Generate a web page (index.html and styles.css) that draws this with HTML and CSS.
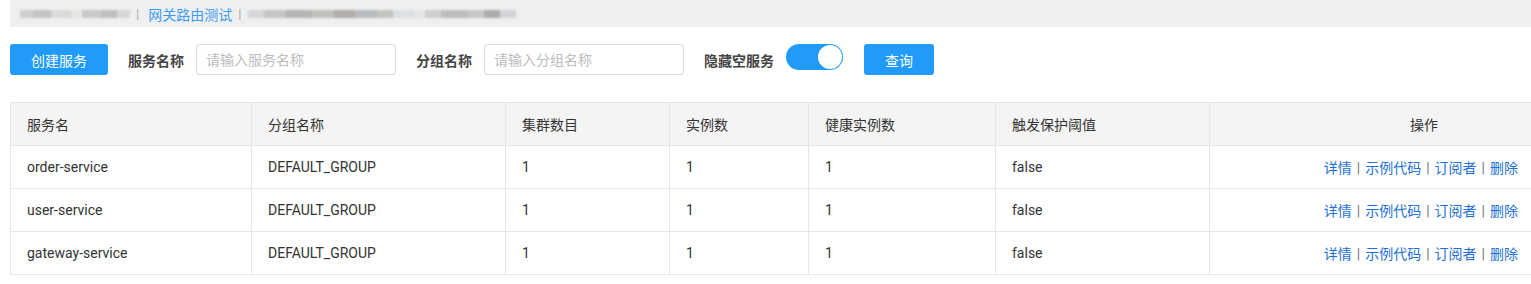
FILE: index.html
```html
<!DOCTYPE html>
<html lang="zh-CN">
<head>
    <meta charset="UTF-8">
    <meta name="viewport" content="width=device-width, initial-scale=1.0">
    <title>服务列表</title>
    <link rel="stylesheet" href="styles.css">
</head>
<body>
<div class="page">
    <div class="crumbs">
        <span class="blur blur-a"></span>
        <span class="sep">|</span>
        <a class="crumb-link" href="#">网关路由测试</a>
        <span class="sep">|</span>
        <span class="blur blur-b"></span>
    </div>

    <div class="toolbar">
        <button class="btn btn-wide">创建服务</button>
        <div class="field">
            <label>服务名称</label>
            <input type="text" placeholder="请输入服务名称">
        </div>
        <div class="field">
            <label>分组名称</label>
            <input type="text" placeholder="请输入分组名称">
        </div>
        <div class="field">
            <label>隐藏空服务</label>
            <span class="switch"><span class="knob"></span></span>
        </div>
        <button class="btn btn-query">查询</button>
    </div>

    <table class="list">
        <colgroup>
            <col style="width: 241px">
            <col style="width: 254px">
            <col style="width: 164px">
            <col style="width: 139px">
            <col style="width: 187px">
            <col style="width: 214px">
            <col style="width: 429px">
        </colgroup>
        <thead>
            <tr>
                <th>服务名</th>
                <th>分组名称</th>
                <th>集群数目</th>
                <th>实例数</th>
                <th>健康实例数</th>
                <th>触发保护阈值</th>
                <th class="center">操作</th>
            </tr>
        </thead>
        <tbody>
            <tr>
                <td>order-service</td>
                <td>DEFAULT_GROUP</td>
                <td>1</td>
                <td>1</td>
                <td>1</td>
                <td>false</td>
                <td class="actions"><a href="#">详情</a><span class="bar">|</span><a href="#">示例代码</a><span class="bar">|</span><a href="#">订阅者</a><span class="bar">|</span><a href="#">删除</a></td>
            </tr>
            <tr>
                <td>user-service</td>
                <td>DEFAULT_GROUP</td>
                <td>1</td>
                <td>1</td>
                <td>1</td>
                <td>false</td>
                <td class="actions"><a href="#">详情</a><span class="bar">|</span><a href="#">示例代码</a><span class="bar">|</span><a href="#">订阅者</a><span class="bar">|</span><a href="#">删除</a></td>
            </tr>
            <tr>
                <td>gateway-service</td>
                <td>DEFAULT_GROUP</td>
                <td>1</td>
                <td>1</td>
                <td>1</td>
                <td>false</td>
                <td class="actions"><a href="#">详情</a><span class="bar">|</span><a href="#">示例代码</a><span class="bar">|</span><a href="#">订阅者</a><span class="bar">|</span><a href="#">删除</a></td>
            </tr>
        </tbody>
    </table>
</div>
</body>
</html>
```

FILE: styles.css
```css
html, body {
    margin: 0;
    overflow: hidden;
    background: #fff;
}

.page {
    width: 1531px;
    height: 284px;
    overflow: hidden;
    font-family: Roboto, "Noto Sans CJK SC", sans-serif;
    font-size: 14px;
    color: #333;
}

/* breadcrumb bar */
.crumbs {
    margin-left: 10px;
    height: 27px;
    background: #efefef;
    display: flex;
    align-items: center;
    padding-left: 10px;
    box-sizing: border-box;
}

.crumbs .sep {
    color: #aaa;
    margin: 0 9px 0 6px;
    font-size: 13px;
}

.crumb-link {
    color: #3d9cf3;
    text-decoration: none;
}

.blur {
    display: inline-block;
    height: 8px;
    filter: blur(1px);
}

.blur-a {
    width: 110px;
    background: linear-gradient(90deg, #cfcfcf 0 12%, #c4c4c4 12% 28%, #dadada 28% 46%, #e6e6e2 46% 56%, #c9c9c9 56% 74%, #bfbfbf 74% 88%, #d6d6d6 88% 100%);
}

.blur-b {
    width: 268px;
    margin-left: -2px;
    background: linear-gradient(90deg, #d6d6d6 0 6%, #c6c6c6 6% 14%, #b4b4b4 14% 24%, #c0c0bc 24% 32%, #b2aeaa 32% 40%, #b8bcc0 40% 48%, #c6c4c0 48% 54%, #dde0e4 54% 62%, #e6e6e6 62% 66%, #cfcfcf 66% 72%, #bdbdbd 72% 82%, #c8c8c8 82% 88%, #acacac 88% 94%, #d4d4d8 94% 100%);
}

/* toolbar */
.toolbar {
    display: flex;
    align-items: center;
    gap: 20px;
    padding-left: 10px;
    margin-top: 17px;
    height: 31px;
}

.field {
    display: flex;
    align-items: center;
    gap: 12px;
}

.field label {
    font-weight: bold;
    color: #444;
}

.field input {
    width: 200px;
    height: 31px;
    box-sizing: border-box;
    border: 1px solid #dcdcdc;
    border-radius: 3px;
    padding: 0 9px;
    font-family: inherit;
    font-size: 14px;
    outline: none;
}

.field input::placeholder {
    color: #bcbcbc;
}

.btn {
    height: 31px;
    border: 0;
    border-radius: 3px;
    background: #209bfa;
    color: #fff;
    font-family: inherit;
    font-size: 14px;
    cursor: pointer;
}

.btn-wide {
    width: 98px;
}

.btn-query {
    width: 70px;
    margin-left: 1px;
}

.switch {
    position: relative;
    display: inline-block;
    width: 57px;
    height: 26px;
    border-radius: 13px;
    background: #209bfa;
    margin-bottom: 5px;
}

.knob {
    position: absolute;
    top: 1px;
    right: 1px;
    width: 24px;
    height: 24px;
    border-radius: 50%;
    background: #fff;
}

/* table */
.list {
    margin: 27px 0 0 10px;
    border-collapse: collapse;
    table-layout: fixed;
    width: 1628px;
}

.list th,
.list td {
    border: 1px solid #e6e6e6;
    padding: 0 16px;
    text-align: left;
    font-weight: normal;
    white-space: nowrap;
}

.list th {
    height: 42px;
    background: #f4f4f4;
}

.list td {
    height: 42px;
}

.list th.center {
    text-align: center;
}

.list td.actions {
    text-align: right;
    padding-right: 120px;
}

.actions a {
    color: #1e6fd9;
    text-decoration: none;
}

.actions .bar {
    color: #777;
    margin: 0 5px;
}
```
